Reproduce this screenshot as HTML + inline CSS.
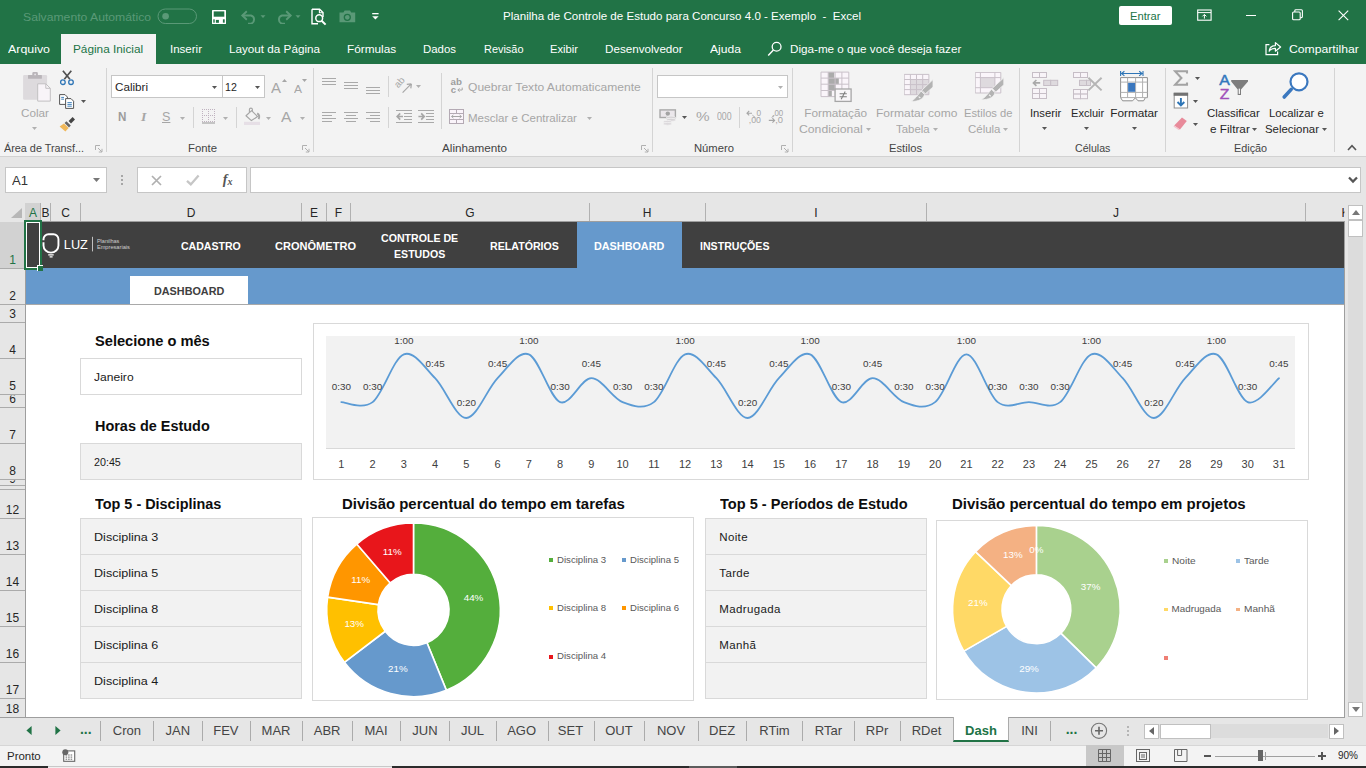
<!DOCTYPE html><html><head><meta charset="utf-8"><title>Planilha de Controle de Estudo para Concurso 4.0 - Exemplo - Excel</title><style>html,body{margin:0;padding:0;background:#fff}body{width:1366px;height:768px;overflow:hidden;position:relative;font-family:"Liberation Sans",sans-serif}#a{position:absolute;left:0;top:0;width:1366px;height:768px;overflow:hidden}#a>div,#a>svg,#a>span{position:absolute;display:block}#a>span{white-space:nowrap;line-height:20px;height:20px;transform-origin:0 50%}svg text{font-family:"Liberation Sans",sans-serif}</style></head><body><div id="a">
<div style="left:0px;top:0px;width:1366px;height:64px;background:#217346;"></div>
<div style="left:61px;top:34px;width:95px;height:30px;background:#f3f3f3;"></div>
<div style="left:0px;top:64px;width:1366px;height:92px;background:#f3f3f3;"></div>
<div style="left:0px;top:156px;width:1366px;height:1px;background:#d2d2d2;"></div>
<div style="left:0px;top:157px;width:1366px;height:46px;background:#e6e6e6;"></div>
<div style="left:5px;top:167px;width:102px;height:26px;background:#fff;box-sizing:border-box;border:1px solid #c6c6c6"></div>
<div style="left:137px;top:167px;width:110px;height:26px;background:#fff;box-sizing:border-box;border:1px solid #c6c6c6"></div>
<div style="left:250px;top:167px;width:1111px;height:26px;background:#fff;box-sizing:border-box;border:1px solid #c6c6c6"></div>
<div style="left:0px;top:203px;width:1366px;height:19px;background:#e6e6e6;"></div>
<div style="left:25px;top:222px;width:1320px;height:496px;background:#fff;"></div>
<div style="left:0px;top:222px;width:25px;height:496px;background:#e6e6e6;"></div>
<div style="left:25px;top:222px;width:1px;height:496px;background:#9e9e9e;"></div>
<div style="left:25px;top:221px;width:1320px;height:1px;background:#9e9e9e;"></div>
<div style="left:25px;top:203px;width:16px;height:18px;background:#d2d2d2;"></div>
<div style="left:25px;top:220px;width:16px;height:2px;background:#217346;"></div>
<div style="left:0px;top:222px;width:24px;height:47px;background:#d2d2d2;"></div>
<div style="left:24px;top:222px;width:2px;height:47px;background:#217346;"></div>
<div style="left:40px;top:203px;width:1px;height:18px;background:#b1b1b1;"></div>
<div style="left:50px;top:203px;width:1px;height:18px;background:#b1b1b1;"></div>
<div style="left:80px;top:203px;width:1px;height:18px;background:#b1b1b1;"></div>
<div style="left:301px;top:203px;width:1px;height:18px;background:#b1b1b1;"></div>
<div style="left:326px;top:203px;width:1px;height:18px;background:#b1b1b1;"></div>
<div style="left:350px;top:203px;width:1px;height:18px;background:#b1b1b1;"></div>
<div style="left:589px;top:203px;width:1px;height:18px;background:#b1b1b1;"></div>
<div style="left:705px;top:203px;width:1px;height:18px;background:#b1b1b1;"></div>
<div style="left:926px;top:203px;width:1px;height:18px;background:#b1b1b1;"></div>
<div style="left:1305px;top:203px;width:1px;height:18px;background:#b1b1b1;"></div>
<div style="left:0px;top:268px;width:25px;height:1px;background:#ababab;"></div>
<div style="left:0px;top:304px;width:25px;height:1px;background:#ababab;"></div>
<div style="left:0px;top:322px;width:25px;height:1px;background:#ababab;"></div>
<div style="left:0px;top:358px;width:25px;height:1px;background:#ababab;"></div>
<div style="left:0px;top:394px;width:25px;height:1px;background:#ababab;"></div>
<div style="left:0px;top:407px;width:25px;height:1px;background:#ababab;"></div>
<div style="left:0px;top:443px;width:25px;height:1px;background:#ababab;"></div>
<div style="left:0px;top:479px;width:25px;height:1px;background:#ababab;"></div>
<div style="left:0px;top:485px;width:25px;height:1px;background:#ababab;"></div>
<div style="left:0px;top:489px;width:25px;height:1px;background:#ababab;"></div>
<div style="left:0px;top:518px;width:25px;height:1px;background:#ababab;"></div>
<div style="left:0px;top:554px;width:25px;height:1px;background:#ababab;"></div>
<div style="left:0px;top:590px;width:25px;height:1px;background:#ababab;"></div>
<div style="left:0px;top:626px;width:25px;height:1px;background:#ababab;"></div>
<div style="left:0px;top:662px;width:25px;height:1px;background:#ababab;"></div>
<div style="left:0px;top:698px;width:25px;height:1px;background:#ababab;"></div>
<div style="left:0px;top:718px;width:25px;height:1px;background:#ababab;"></div>
<div style="left:26px;top:222px;width:1319px;height:46px;background:#404040;"></div>
<div style="left:26px;top:268px;width:1319px;height:36px;background:#6699cc;"></div>
<div style="left:577px;top:222px;width:105px;height:46px;background:#6699cc;"></div>
<div style="left:130px;top:276px;width:118px;height:28px;background:#fff;"></div>
<div style="left:26px;top:304px;width:1319px;height:1px;background:#a9a9a9;"></div>
<div style="left:24px;top:220px;width:18px;height:50px;background:transparent;box-sizing:border-box;border:2px solid #217346;"></div>
<div style="left:26px;top:222px;width:14px;height:46px;background:transparent;box-sizing:border-box;border:1px solid #fff;"></div>
<div style="left:37px;top:265px;width:6px;height:6px;background:#217346;box-sizing:border-box;border-left:1px solid #fff;border-top:1px solid #fff;"></div>
<div style="left:80px;top:358px;width:222px;height:37px;background:#fff;box-sizing:border-box;border:1px solid #d9d9d9"></div>
<div style="left:80px;top:443px;width:222px;height:37px;background:#f2f2f2;box-sizing:border-box;border:1px solid #d9d9d9"></div>
<div style="left:80px;top:518px;width:222px;height:181px;background:#f2f2f2;box-sizing:border-box;border:1px solid #d9d9d9"></div>
<div style="left:81px;top:554px;width:220px;height:1px;background:#d9d9d9;"></div>
<div style="left:81px;top:590px;width:220px;height:1px;background:#d9d9d9;"></div>
<div style="left:81px;top:626px;width:220px;height:1px;background:#d9d9d9;"></div>
<div style="left:81px;top:662px;width:220px;height:1px;background:#d9d9d9;"></div>
<div style="left:705px;top:518px;width:222px;height:181px;background:#f2f2f2;box-sizing:border-box;border:1px solid #d9d9d9"></div>
<div style="left:706px;top:554px;width:220px;height:1px;background:#d9d9d9;"></div>
<div style="left:706px;top:590px;width:220px;height:1px;background:#d9d9d9;"></div>
<div style="left:706px;top:626px;width:220px;height:1px;background:#d9d9d9;"></div>
<div style="left:706px;top:662px;width:220px;height:1px;background:#d9d9d9;"></div>
<div style="left:313px;top:323px;width:996px;height:157px;background:#fff;box-sizing:border-box;border:1px solid #d9d9d9"></div>
<div style="left:326px;top:336px;width:969px;height:112px;background:#f2f2f2;"></div>
<div style="left:326px;top:448px;width:969px;height:1px;background:#d9d9d9;"></div>
<div style="left:312px;top:517px;width:382px;height:184px;background:#fff;box-sizing:border-box;border:1px solid #d9d9d9"></div>
<div style="left:549px;top:558px;width:4px;height:4px;background:#54ae3c;"></div>
<div style="left:622px;top:558px;width:4px;height:4px;background:#6699cc;"></div>
<div style="left:549px;top:606px;width:4px;height:4px;background:#ffc000;"></div>
<div style="left:622px;top:606px;width:4px;height:4px;background:#ff9600;"></div>
<div style="left:549px;top:655px;width:4px;height:4px;background:#e8161b;"></div>
<div style="left:936px;top:520px;width:372px;height:180px;background:#fff;box-sizing:border-box;border:1px solid #d9d9d9"></div>
<div style="left:1164px;top:559px;width:4px;height:4px;background:#a9d18e;"></div>
<div style="left:1236px;top:559px;width:4px;height:4px;background:#9dc3e6;"></div>
<div style="left:1164px;top:608px;width:4px;height:3px;background:#ffd966;"></div>
<div style="left:1236px;top:608px;width:4px;height:3px;background:#f4b183;"></div>
<div style="left:1164px;top:656px;width:4px;height:4px;background:#ef7f74;"></div>
<div style="left:1119px;top:6px;width:53px;height:19px;background:#fff;border-radius:2px"></div>
<div style="left:1246px;top:15px;width:10px;height:1px;background:#fff;"></div>
<div style="left:106px;top:68px;width:1px;height:84px;background:#d4d4d4;"></div>
<div style="left:313px;top:68px;width:1px;height:84px;background:#d4d4d4;"></div>
<div style="left:652px;top:68px;width:1px;height:84px;background:#d4d4d4;"></div>
<div style="left:792px;top:68px;width:1px;height:84px;background:#d4d4d4;"></div>
<div style="left:1019px;top:68px;width:1px;height:84px;background:#d4d4d4;"></div>
<div style="left:1165px;top:68px;width:1px;height:84px;background:#d4d4d4;"></div>
<div style="left:1334px;top:68px;width:1px;height:84px;background:#d4d4d4;"></div>
<div style="left:111px;top:75px;width:112px;height:23px;background:#fff;box-sizing:border-box;border:1px solid #c6c6c6"></div>
<div style="left:222px;top:75px;width:43px;height:23px;background:#fff;box-sizing:border-box;border:1px solid #c6c6c6"></div>
<div style="left:193px;top:107px;width:1px;height:21px;background:#d4d4d4;"></div>
<div style="left:236px;top:107px;width:1px;height:21px;background:#d4d4d4;"></div>
<div style="left:322px;top:78px;width:14px;height:1px;background:#a9a9a9;"></div>
<div style="left:322px;top:81px;width:14px;height:1px;background:#a9a9a9;"></div>
<div style="left:322px;top:84px;width:14px;height:1px;background:#a9a9a9;"></div>
<div style="left:344px;top:82px;width:14px;height:1px;background:#a9a9a9;"></div>
<div style="left:344px;top:85px;width:14px;height:1px;background:#a9a9a9;"></div>
<div style="left:344px;top:88px;width:14px;height:1px;background:#a9a9a9;"></div>
<div style="left:366px;top:87px;width:14px;height:1px;background:#a9a9a9;"></div>
<div style="left:366px;top:90px;width:14px;height:1px;background:#a9a9a9;"></div>
<div style="left:366px;top:93px;width:14px;height:1px;background:#a9a9a9;"></div>
<div style="left:388px;top:76px;width:1px;height:21px;background:#d4d4d4;"></div>
<div style="left:322px;top:112px;width:14px;height:1px;background:#a9a9a9;"></div>
<div style="left:344px;top:112px;width:14px;height:1px;background:#a9a9a9;"></div>
<div style="left:366px;top:112px;width:14px;height:1px;background:#a9a9a9;"></div>
<div style="left:322px;top:115px;width:10px;height:1px;background:#a9a9a9;"></div>
<div style="left:346px;top:115px;width:10px;height:1px;background:#a9a9a9;"></div>
<div style="left:370px;top:115px;width:10px;height:1px;background:#a9a9a9;"></div>
<div style="left:322px;top:118px;width:14px;height:1px;background:#a9a9a9;"></div>
<div style="left:344px;top:118px;width:14px;height:1px;background:#a9a9a9;"></div>
<div style="left:366px;top:118px;width:14px;height:1px;background:#a9a9a9;"></div>
<div style="left:322px;top:121px;width:10px;height:1px;background:#a9a9a9;"></div>
<div style="left:346px;top:121px;width:10px;height:1px;background:#a9a9a9;"></div>
<div style="left:370px;top:121px;width:10px;height:1px;background:#a9a9a9;"></div>
<div style="left:388px;top:107px;width:1px;height:21px;background:#d4d4d4;"></div>
<div style="left:396px;top:110px;width:16px;height:1px;background:#a9a9a9;"></div>
<div style="left:396px;top:122px;width:16px;height:1px;background:#a9a9a9;"></div>
<div style="left:404px;top:113px;width:8px;height:1px;background:#a9a9a9;"></div>
<div style="left:404px;top:116px;width:8px;height:1px;background:#a9a9a9;"></div>
<div style="left:404px;top:119px;width:8px;height:1px;background:#a9a9a9;"></div>
<div style="left:418px;top:110px;width:16px;height:1px;background:#a9a9a9;"></div>
<div style="left:418px;top:122px;width:16px;height:1px;background:#a9a9a9;"></div>
<div style="left:426px;top:113px;width:8px;height:1px;background:#a9a9a9;"></div>
<div style="left:426px;top:116px;width:8px;height:1px;background:#a9a9a9;"></div>
<div style="left:426px;top:119px;width:8px;height:1px;background:#a9a9a9;"></div>
<div style="left:441px;top:73px;width:1px;height:56px;background:#d4d4d4;"></div>
<div style="left:657px;top:75px;width:131px;height:23px;background:#fff;box-sizing:border-box;border:1px solid #c6c6c6"></div>
<div style="left:739px;top:107px;width:1px;height:21px;background:#d4d4d4;"></div>
<div style="left:121px;top:175px;width:2px;height:2px;background:#a6a6a6;"></div>
<div style="left:121px;top:179px;width:2px;height:2px;background:#a6a6a6;"></div>
<div style="left:121px;top:183px;width:2px;height:2px;background:#a6a6a6;"></div>
<div style="left:1345px;top:203px;width:21px;height:515px;background:#e6e6e6;"></div>
<div style="left:1344px;top:222px;width:1px;height:495px;background:#9e9e9e;"></div>
<div style="left:1348px;top:236px;width:15px;height:467px;background:#dcdcdc;"></div>
<div style="left:1348px;top:205px;width:15px;height:15px;background:#fff;box-sizing:border-box;border:1px solid #c0c0c0"></div>
<div style="left:1348px;top:220px;width:15px;height:17px;background:#fff;box-sizing:border-box;border:1px solid #c0c0c0"></div>
<div style="left:1348px;top:702px;width:15px;height:15px;background:#fff;box-sizing:border-box;border:1px solid #c0c0c0"></div>
<div style="left:0px;top:717px;width:1366px;height:28px;background:#e6e6e6;"></div>
<div style="left:0px;top:717px;width:1345px;height:1px;background:#9e9e9e;"></div>
<div style="left:153px;top:721px;width:1px;height:20px;background:#ababab;"></div>
<div style="left:202px;top:721px;width:1px;height:20px;background:#ababab;"></div>
<div style="left:250px;top:721px;width:1px;height:20px;background:#ababab;"></div>
<div style="left:302px;top:721px;width:1px;height:20px;background:#ababab;"></div>
<div style="left:352px;top:721px;width:1px;height:20px;background:#ababab;"></div>
<div style="left:400px;top:721px;width:1px;height:20px;background:#ababab;"></div>
<div style="left:449px;top:721px;width:1px;height:20px;background:#ababab;"></div>
<div style="left:496px;top:721px;width:1px;height:20px;background:#ababab;"></div>
<div style="left:548px;top:721px;width:1px;height:20px;background:#ababab;"></div>
<div style="left:594px;top:721px;width:1px;height:20px;background:#ababab;"></div>
<div style="left:644px;top:721px;width:1px;height:20px;background:#ababab;"></div>
<div style="left:698px;top:721px;width:1px;height:20px;background:#ababab;"></div>
<div style="left:746px;top:721px;width:1px;height:20px;background:#ababab;"></div>
<div style="left:802px;top:721px;width:1px;height:20px;background:#ababab;"></div>
<div style="left:854px;top:721px;width:1px;height:20px;background:#ababab;"></div>
<div style="left:900px;top:721px;width:1px;height:20px;background:#ababab;"></div>
<div style="left:953px;top:717px;width:56px;height:25px;background:#fff;box-sizing:border-box;border-left:1px solid #ababab;border-right:1px solid #ababab;border-bottom:2px solid #217346"></div>
<div style="left:1050px;top:721px;width:1px;height:20px;background:#ababab;"></div>
<div style="left:100px;top:721px;width:1px;height:20px;background:#ababab;"></div>
<div style="left:1127px;top:726px;width:2px;height:2px;background:#b5b5b5;"></div>
<div style="left:1127px;top:730px;width:2px;height:2px;background:#b5b5b5;"></div>
<div style="left:1127px;top:734px;width:2px;height:2px;background:#b5b5b5;"></div>
<div style="left:1159px;top:724px;width:169px;height:14px;background:#dcdcdc;"></div>
<div style="left:1144px;top:724px;width:15px;height:15px;background:#fff;box-sizing:border-box;border:1px solid #c0c0c0"></div>
<div style="left:1160px;top:724px;width:51px;height:15px;background:#fff;box-sizing:border-box;border:1px solid #c0c0c0"></div>
<div style="left:1329px;top:724px;width:15px;height:15px;background:#fff;box-sizing:border-box;border:1px solid #c0c0c0"></div>
<div style="left:0px;top:745px;width:1366px;height:21px;background:#f3f3f3;"></div>
<div style="left:0px;top:745px;width:1366px;height:1px;background:#d6d6d6;"></div>
<div style="left:1086px;top:745px;width:38px;height:21px;background:#c8c8c8;"></div>
<div style="left:1204px;top:755px;width:7px;height:2px;background:#555;"></div>
<div style="left:1215px;top:756px;width:100px;height:1px;background:#a0a0a0;"></div>
<div style="left:1265px;top:752px;width:1px;height:8px;background:#a0a0a0;"></div>
<div style="left:1258px;top:750px;width:5px;height:11px;background:#666;"></div>
<div style="left:1318px;top:755px;width:8px;height:2px;background:#555;"></div>
<div style="left:1321px;top:752px;width:2px;height:8px;background:#555;"></div>
<div style="left:0px;top:766px;width:1366px;height:2px;background:#2b2b2b;"></div>
<div style="left:48px;top:766px;width:344px;height:1px;background:#c8c8c8;"></div>
<div style="left:48px;top:767px;width:344px;height:1px;background:#f0f0f0;"></div>
<div style="left:689px;top:766px;width:48px;height:2px;background:#5c5c5c;"></div>
<svg style="left:11px;top:208px" width="12" height="11" viewBox="0 0 12 11"><path d="M11 0 L11 10 L0 10 Z" fill="#b7b7b7"/></svg>
<svg style="left:41px;top:232px" width="92" height="28" viewBox="0 0 92 28">
<path d="M2.5 8.3 V7.3 A5 5 0 0 1 7.5 2.3 H12.45 A5 5 0 0 1 17.45 7.3 V13.4 A7.47 7.2 0 0 1 2.5 13.4 V10.3" fill="none" stroke="#fff" stroke-width="1.9"/>
<path d="M7.2 22.9 H12.7 M8.6 24.9 H11.6" stroke="#fff" stroke-width="1.3" fill="none"/>
<rect x="51" y="4.8" width="0.9" height="14.6" fill="#d0d0d0"/>
<text x="22.8" y="16.6" font-size="12.8" fill="#fff" textLength="24.1" lengthAdjust="spacingAndGlyphs">LUZ</text>
<text x="55.9" y="11.4" font-size="5.8" fill="#cfcfcf" textLength="22.5" lengthAdjust="spacingAndGlyphs">Planilhas</text>
<text x="55.9" y="17.2" font-size="5.8" fill="#cfcfcf" textLength="33" lengthAdjust="spacingAndGlyphs">Empresariais</text>
</svg>
<svg style="left:0px;top:323px" width="1366" height="160" viewBox="0 323 1366 160"><path d="M341.3 402.1 C346.5 402.1 362.1 410.0 372.6 402.1 C383.0 394.1 393.4 358.2 403.8 354.3 C414.2 350.3 424.6 367.5 435.1 378.2 C445.5 388.8 455.9 418.0 466.3 418.0 C476.7 418.0 487.2 388.8 497.6 378.2 C508.0 367.5 518.4 350.3 528.8 354.3 C539.2 358.2 549.7 398.1 560.1 402.1 C570.5 406.1 580.9 378.2 591.3 378.2 C601.8 378.2 612.2 398.1 622.6 402.1 C633.0 406.1 643.4 410.0 653.9 402.1 C664.3 394.1 674.7 358.2 685.1 354.3 C695.5 350.3 705.9 367.5 716.4 378.2 C726.8 388.8 737.2 418.0 747.6 418.0 C758.0 418.0 768.5 388.8 778.9 378.2 C789.3 367.5 799.7 350.3 810.1 354.3 C820.5 358.2 831.0 398.1 841.4 402.1 C851.8 406.1 862.2 378.2 872.6 378.2 C883.1 378.2 893.5 398.1 903.9 402.1 C914.3 406.1 924.7 410.0 935.1 402.1 C945.6 394.1 956.0 354.3 966.4 354.3 C976.8 354.3 987.2 394.1 997.7 402.1 C1008.1 410.0 1018.5 402.1 1028.9 402.1 C1039.3 402.1 1049.7 410.0 1060.2 402.1 C1070.6 394.1 1081.0 358.2 1091.4 354.3 C1101.8 350.3 1112.3 367.5 1122.7 378.2 C1133.1 388.8 1143.5 418.0 1153.9 418.0 C1164.3 418.0 1174.8 388.8 1185.2 378.2 C1195.6 367.5 1206.0 350.3 1216.4 354.3 C1226.9 358.2 1237.3 398.1 1247.7 402.1 C1258.1 406.1 1273.7 382.2 1279.0 378.2" fill="none" stroke="#5b9bd5" stroke-width="1.8" stroke-linecap="round" stroke-linejoin="round"/></svg>
<svg style="left:312px;top:517px" width="382" height="184" viewBox="312 517 382 184"><path d="M413.50 523.00 A86.8 86.8 0 0 1 446.30 690.17 L426.91 642.67 A35.5 35.5 0 0 0 413.50 574.30 Z" fill="#54ae3c" stroke="#fff" stroke-width="1.6" stroke-linejoin="round"/><path d="M446.30 690.17 A86.8 86.8 0 0 1 344.36 662.28 L385.22 631.26 A35.5 35.5 0 0 0 426.91 642.67 Z" fill="#6699cc" stroke="#fff" stroke-width="1.6" stroke-linejoin="round"/><path d="M344.36 662.28 A86.8 86.8 0 0 1 327.63 597.12 L378.38 604.61 A35.5 35.5 0 0 0 385.22 631.26 Z" fill="#ffc000" stroke="#fff" stroke-width="1.6" stroke-linejoin="round"/><path d="M327.63 597.12 A86.8 86.8 0 0 1 356.78 544.09 L390.30 582.93 A35.5 35.5 0 0 0 378.38 604.61 Z" fill="#ff9600" stroke="#fff" stroke-width="1.6" stroke-linejoin="round"/><path d="M356.78 544.09 A86.8 86.8 0 0 1 413.50 523.00 L413.50 574.30 A35.5 35.5 0 0 0 390.30 582.93 Z" fill="#e8161b" stroke="#fff" stroke-width="1.6" stroke-linejoin="round"/></svg>
<svg style="left:936px;top:520px" width="372" height="180" viewBox="936 520 372 180"><path d="M1036.40 525.40 A83.8 83.8 0 0 1 1096.17 667.94 L1060.94 633.31 A34.4 34.4 0 0 0 1036.40 574.80 Z" fill="#a9d18e" stroke="#fff" stroke-width="1.6" stroke-linejoin="round"/><path d="M1096.17 667.94 A83.8 83.8 0 0 1 963.83 651.10 L1006.61 626.40 A34.4 34.4 0 0 0 1060.94 633.31 Z" fill="#9dc3e6" stroke="#fff" stroke-width="1.6" stroke-linejoin="round"/><path d="M963.83 651.10 A83.8 83.8 0 0 1 975.51 551.62 L1011.41 585.56 A34.4 34.4 0 0 0 1006.61 626.40 Z" fill="#ffd966" stroke="#fff" stroke-width="1.6" stroke-linejoin="round"/><path d="M975.51 551.62 A83.8 83.8 0 0 1 1036.40 525.40 L1036.40 574.80 A34.4 34.4 0 0 0 1011.41 585.56 Z" fill="#f4b183" stroke="#fff" stroke-width="1.6" stroke-linejoin="round"/></svg>
<svg style="left:157px;top:8px" width="41" height="17" viewBox="0 0 41 17"><rect x="1" y="1" width="38.5" height="14.5" rx="7.25" fill="none" stroke="#5a9977" stroke-width="1"/><circle cx="8.6" cy="8.25" r="3.3" fill="#5a9977"/></svg>
<svg style="left:212px;top:10px" width="14" height="14" viewBox="0 0 14 14"><rect x="0" y="0" width="14" height="14" rx="0.6" fill="#fff"/><rect x="1.7" y="1.4" width="10.6" height="5.3" fill="#217346"/><rect x="1.3" y="9.3" width="1.4" height="3.4" fill="#217346"/><rect x="10.9" y="9.3" width="1.8" height="3.4" fill="#217346"/><rect x="3.9" y="9.9" width="3" height="2.9" fill="#217346"/></svg>
<svg style="left:240px;top:9px" width="26" height="15" viewBox="0 0 26 15"><path d="M2.5 6.5 H11 A4.2 4.2 0 0 1 11 14.6 H8" fill="none" stroke="#5a9977" stroke-width="1.9"/><path d="M6.8 2.2 L2.3 6.5 L6.8 10.8" fill="none" stroke="#5a9977" stroke-width="1.9"/><path d="M20.5 6.3 h5 l-2.5 2.7z" fill="#5a9977"/></svg>
<svg style="left:275px;top:9px" width="26" height="15" viewBox="0 0 26 15"><path d="M15.5 6.5 H7 A4.2 4.2 0 0 0 7 14.6 H10" fill="none" stroke="#5a9977" stroke-width="1.9"/><path d="M11.2 2.2 L15.7 6.5 L11.2 10.8" fill="none" stroke="#5a9977" stroke-width="1.9"/><path d="M20.5 6.3 h5 l-2.5 2.7z" fill="#5a9977"/></svg>
<svg style="left:310px;top:8px" width="18" height="18" viewBox="0 0 18 18"><path d="M2 1.2 H9.6 L13 4.6 V9 M2 1.2 V15.8 H8" fill="none" stroke="#fff" stroke-width="1.4"/><path d="M9.4 1.4 V4.8 H12.8" fill="none" stroke="#fff" stroke-width="1.1"/><circle cx="9.2" cy="10.2" r="3.4" fill="none" stroke="#fff" stroke-width="1.5"/><path d="M11.6 12.8 L15.6 16.6" stroke="#fff" stroke-width="2"/></svg>
<svg style="left:339px;top:10px" width="17" height="13" viewBox="0 0 17 13"><path d="M0.5 2.6 H4.4 L5.6 0.6 H11 L12.2 2.6 H16.2 V12.2 H0.5 Z" fill="#5a9977"/><circle cx="8.3" cy="7.3" r="3" fill="none" stroke="#217346" stroke-width="1.3"/></svg>
<svg style="left:371px;top:12px" width="9" height="9" viewBox="0 0 9 9"><rect x="1.2" y="1" width="6.4" height="1.3" fill="#fff"/><path d="M1.2 4.2 h6.4 l-3.2 3.4z" fill="#fff"/></svg>
<svg style="left:1197px;top:9px" width="15" height="12" viewBox="0 0 15 12"><rect x="0.7" y="1" width="13.4" height="10.2" fill="none" stroke="#fff" stroke-width="1.1"/><path d="M0.7 3.6 H14" stroke="#fff" stroke-width="1"/><path d="M7.4 9.6 V5.6 M5.4 7.4 L7.4 5.4 L9.4 7.4" fill="none" stroke="#fff" stroke-width="1"/></svg>
<svg style="left:1292px;top:9px" width="11" height="12" viewBox="0 0 11 12"><rect x="0.6" y="3" width="7.6" height="7.8" rx="1" fill="none" stroke="#fff" stroke-width="1.1"/><path d="M2.8 3 V1.6 A1 1 0 0 1 3.8 0.7 H9.4 A1 1 0 0 1 10.4 1.7 V7.6 A1 1 0 0 1 9.4 8.6 H8.4" fill="none" stroke="#fff" stroke-width="1.1"/></svg>
<svg style="left:1338px;top:10px" width="11" height="11" viewBox="0 0 11 11"><path d="M0.6 0.6 L10.2 10.2 M10.2 0.6 L0.6 10.2" stroke="#fff" stroke-width="1.1"/></svg>
<svg style="left:767px;top:41px" width="16" height="16" viewBox="0 0 16 16"><circle cx="9.6" cy="5.8" r="4.4" fill="none" stroke="#fff" stroke-width="1.3"/><path d="M6.4 9 L1.2 14.4" stroke="#fff" stroke-width="1.5"/></svg>
<svg style="left:1265px;top:40px" width="17" height="16" viewBox="0 0 17 16"><path d="M4.4 4.6 H1 V14.6 H12.6 V11.6" fill="none" stroke="#fff" stroke-width="1.2"/><path d="M4.2 11.2 C4.6 7.2 7.4 5.6 10.4 5.6 V2.6 L15.6 7 L10.4 11.2 V8.4 C8 8.2 5.8 9 4.2 11.2 Z" fill="none" stroke="#fff" stroke-width="1.2" stroke-linejoin="round"/></svg>
<svg style="left:95px;top:145px" width="8" height="8" viewBox="0 0 8 8"><path d="M0.5 5 V0.5 H5" fill="none" stroke="#b0b0b0" stroke-width="1"/><path d="M3 3 L7 7 M7 3.8 V7 H3.8" fill="none" stroke="#b0b0b0" stroke-width="1"/></svg>
<svg style="left:302px;top:145px" width="8" height="8" viewBox="0 0 8 8"><path d="M0.5 5 V0.5 H5" fill="none" stroke="#b0b0b0" stroke-width="1"/><path d="M3 3 L7 7 M7 3.8 V7 H3.8" fill="none" stroke="#b0b0b0" stroke-width="1"/></svg>
<svg style="left:641px;top:145px" width="8" height="8" viewBox="0 0 8 8"><path d="M0.5 5 V0.5 H5" fill="none" stroke="#b0b0b0" stroke-width="1"/><path d="M3 3 L7 7 M7 3.8 V7 H3.8" fill="none" stroke="#b0b0b0" stroke-width="1"/></svg>
<svg style="left:781px;top:145px" width="8" height="8" viewBox="0 0 8 8"><path d="M0.5 5 V0.5 H5" fill="none" stroke="#b0b0b0" stroke-width="1"/><path d="M3 3 L7 7 M7 3.8 V7 H3.8" fill="none" stroke="#b0b0b0" stroke-width="1"/></svg>
<svg style="left:1347px;top:144px" width="10" height="7" viewBox="0 0 10 7"><path d="M1 6 L5 1.6 L9 6" fill="none" stroke="#555" stroke-width="1.6"/></svg>
<svg style="left:22px;top:71px" width="30" height="32" viewBox="0 0 30 32"><rect x="1.1" y="4.1" width="24" height="24.7" rx="1.2" fill="#dddadd"/><rect x="6" y="3.9" width="13.9" height="3.9" rx="0.6" fill="#b9b5b9"/><path d="M10.3 4 V2.4 A1.3 1.3 0 0 1 11.6 1.1 H14.6 A1.3 1.3 0 0 1 15.9 2.4 V4 Z" fill="#b9b5b9"/><circle cx="13.1" cy="3.4" r="0.9" fill="#e9e6e9"/>
<path d="M15.7 12.8 H23.8 L28.3 17.3 V30.1 H15.7 Z" fill="#f8f4f8" stroke="#c2c0c2" stroke-width="1"/><path d="M23.8 12.8 V17.3 H28.3" fill="none" stroke="#c2c0c2" stroke-width="1"/></svg>
<svg style="left:32.0px;top:126.7px" width="5" height="3" viewBox="0 0 5 3"><path d="M0 0 H5 L2.5 3 Z" fill="#b0b0b0"/></svg>
<svg style="left:59px;top:70px" width="16" height="16" viewBox="0 0 16 16"><path d="M3.9 0.7 L10.9 9.2 M12.3 0.7 L5.3 9.2" stroke="#505050" stroke-width="1.7" fill="none"/><circle cx="3.9" cy="12.2" r="2.3" fill="none" stroke="#2e75b6" stroke-width="1.3"/><circle cx="12" cy="12.2" r="2.3" fill="none" stroke="#2e75b6" stroke-width="1.3"/></svg>
<svg style="left:59px;top:94px" width="16" height="15" viewBox="0 0 16 15"><path d="M0.6 0.6 H6 L8.4 3 V10.4 H0.6 Z" fill="#fff" stroke="#555" stroke-width="1"/><path d="M6.6 4.6 H12 L14.6 7.2 V14.4 H6.6 Z" fill="#fff" stroke="#555" stroke-width="1"/><path d="M8.4 8.6 H12.8 M8.4 10.4 H12.8 M8.4 12.2 H12.8 M2.2 3.4 H5 M2.2 5.2 H5" stroke="#2e75b6" stroke-width="0.9"/></svg>
<svg style="left:80.5px;top:99.5px" width="5" height="3" viewBox="0 0 5 3"><path d="M0 0 H5 L2.5 3 Z" fill="#555"/></svg>
<svg style="left:59px;top:116px" width="17" height="16" viewBox="0 0 17 16"><path d="M9.6 5 L13.6 1 L16 3.4 L12 7.4 Z" fill="#444"/><path d="M7.4 5.2 L11.8 9.6 L10 11.4 L5.6 7 Z" fill="#666"/><path d="M5 7.4 L9.6 12 L6.4 15.4 L0.6 10.6 Z" fill="#f0b85a"/></svg>
<svg style="left:211.5px;top:85.5px" width="5" height="3" viewBox="0 0 5 3"><path d="M0 0 H5 L2.5 3 Z" fill="#555"/></svg>
<svg style="left:254.8px;top:85.5px" width="5" height="3" viewBox="0 0 5 3"><path d="M0 0 H5 L2.5 3 Z" fill="#555"/></svg>
<svg style="left:282px;top:79px" width="5" height="3" viewBox="0 0 5 3"><path d="M0 3 L2.5 0 L5 3Z" fill="#a6a6a6"/></svg>
<svg style="left:302px;top:79px" width="5" height="3" viewBox="0 0 5 3"><path d="M0 0 L2.5 3 L5 0Z" fill="#a6a6a6"/></svg>
<svg style="left:179.9px;top:116.7px" width="5" height="3" viewBox="0 0 5 3"><path d="M0 0 H5 L2.5 3 Z" fill="#b0b0b0"/></svg>
<svg style="left:202px;top:109px" width="14" height="15" viewBox="0 0 14 15"><rect x="0" y="0" width="1" height="1" fill="#bfb2bf"/><rect x="2" y="0" width="1" height="1" fill="#bfb2bf"/><rect x="4" y="0" width="1" height="1" fill="#bfb2bf"/><rect x="6" y="0" width="1" height="1" fill="#bfb2bf"/><rect x="8" y="0" width="1" height="1" fill="#bfb2bf"/><rect x="10" y="0" width="1" height="1" fill="#bfb2bf"/><rect x="12" y="0" width="1" height="1" fill="#bfb2bf"/><rect x="0" y="6" width="1" height="1" fill="#bfb2bf"/><rect x="2" y="6" width="1" height="1" fill="#bfb2bf"/><rect x="4" y="6" width="1" height="1" fill="#bfb2bf"/><rect x="6" y="6" width="1" height="1" fill="#bfb2bf"/><rect x="8" y="6" width="1" height="1" fill="#bfb2bf"/><rect x="10" y="6" width="1" height="1" fill="#bfb2bf"/><rect x="12" y="6" width="1" height="1" fill="#bfb2bf"/><rect x="0" y="12" width="1" height="1" fill="#bfb2bf"/><rect x="2" y="12" width="1" height="1" fill="#bfb2bf"/><rect x="4" y="12" width="1" height="1" fill="#bfb2bf"/><rect x="6" y="12" width="1" height="1" fill="#bfb2bf"/><rect x="8" y="12" width="1" height="1" fill="#bfb2bf"/><rect x="10" y="12" width="1" height="1" fill="#bfb2bf"/><rect x="12" y="12" width="1" height="1" fill="#bfb2bf"/><rect x="0" y="0" width="1" height="1" fill="#bfb2bf"/><rect x="0" y="2" width="1" height="1" fill="#bfb2bf"/><rect x="0" y="4" width="1" height="1" fill="#bfb2bf"/><rect x="0" y="6" width="1" height="1" fill="#bfb2bf"/><rect x="0" y="8" width="1" height="1" fill="#bfb2bf"/><rect x="0" y="10" width="1" height="1" fill="#bfb2bf"/><rect x="0" y="12" width="1" height="1" fill="#bfb2bf"/><rect x="6" y="0" width="1" height="1" fill="#bfb2bf"/><rect x="6" y="2" width="1" height="1" fill="#bfb2bf"/><rect x="6" y="4" width="1" height="1" fill="#bfb2bf"/><rect x="6" y="6" width="1" height="1" fill="#bfb2bf"/><rect x="6" y="8" width="1" height="1" fill="#bfb2bf"/><rect x="6" y="10" width="1" height="1" fill="#bfb2bf"/><rect x="6" y="12" width="1" height="1" fill="#bfb2bf"/><rect x="12" y="0" width="1" height="1" fill="#bfb2bf"/><rect x="12" y="2" width="1" height="1" fill="#bfb2bf"/><rect x="12" y="4" width="1" height="1" fill="#bfb2bf"/><rect x="12" y="6" width="1" height="1" fill="#bfb2bf"/><rect x="12" y="8" width="1" height="1" fill="#bfb2bf"/><rect x="12" y="10" width="1" height="1" fill="#bfb2bf"/><rect x="12" y="12" width="1" height="1" fill="#bfb2bf"/><rect x="0" y="13.4" width="13" height="1.2" fill="#a6a6a6"/></svg>
<svg style="left:222.7px;top:116.7px" width="5" height="3" viewBox="0 0 5 3"><path d="M0 0 H5 L2.5 3 Z" fill="#b0b0b0"/></svg>
<svg style="left:243px;top:107px" width="19" height="19" viewBox="0 0 19 19"><path d="M8.6 3.6 L14.6 9.6 L8.4 13.6 L3 8.8 Z" fill="none" stroke="#a6a6a6" stroke-width="1.2" stroke-linejoin="round"/><path d="M6.4 5.4 V2.6 A1.5 1.5 0 0 1 9.4 2.6 V4.4" fill="none" stroke="#a6a6a6" stroke-width="1.1"/><path d="M14.2 6.4 C16.2 7.6 16.6 10 15.6 12.2" fill="none" stroke="#a6a6a6" stroke-width="1.9"/><rect x="1" y="14.8" width="16" height="3.2" fill="#e6dfe6"/></svg>
<svg style="left:265.7px;top:116.7px" width="5" height="3" viewBox="0 0 5 3"><path d="M0 0 H5 L2.5 3 Z" fill="#b0b0b0"/></svg>
<svg style="left:300.1px;top:116.7px" width="5" height="3" viewBox="0 0 5 3"><path d="M0 0 H5 L2.5 3 Z" fill="#b0b0b0"/></svg>
<svg style="left:395px;top:77px" width="19" height="18" viewBox="0 0 19 18"><text x="0" y="0" font-size="9.6" fill="#a6a6a6" transform="translate(3.2 11.4) rotate(-48)">ab</text><path d="M7.6 15.6 L16 7.2 M16.4 6.8 l-4.6 0.6 M16.4 6.8 l-0.6 4.6" stroke="#a6a6a6" stroke-width="1.2" fill="none"/></svg>
<svg style="left:415.7px;top:85.1px" width="5" height="3" viewBox="0 0 5 3"><path d="M0 0 H5 L2.5 3 Z" fill="#b0b0b0"/></svg>
<svg style="left:396px;top:112px" width="8" height="9" viewBox="0 0 8 9"><path d="M7 4.5 H1.4 M4.2 1.4 L1.2 4.5 L4.2 7.6" fill="none" stroke="#a6a6a6" stroke-width="1.7"/></svg>
<svg style="left:418px;top:112px" width="8" height="9" viewBox="0 0 8 9"><path d="M0.4 4.5 H6 M3.2 1.4 L6.2 4.5 L3.2 7.6" fill="none" stroke="#a6a6a6" stroke-width="1.7"/></svg>
<svg style="left:450px;top:77px" width="14" height="17" viewBox="0 0 14 17"><text x="0.6" y="8.4" font-size="9.6" fill="#9e9e9e" textLength="11.4" lengthAdjust="spacingAndGlyphs" font-weight="bold">ab</text><text x="0.8" y="15.8" font-size="9.6" fill="#9e9e9e" font-weight="bold">c</text><path d="M12.2 10.6 V13 H8 M9.6 11.4 L7.8 13 L9.6 14.6" fill="none" stroke="#a6a6a6" stroke-width="1"/></svg>
<svg style="left:449px;top:109px" width="15" height="15" viewBox="0 0 15 15"><rect x="0.5" y="0.5" width="14" height="14" fill="#faf4fa" stroke="#b4aab4" stroke-width="1"/><path d="M0.5 4.5 H14.5 M0.5 10.5 H14.5 M7.5 0.5 V4.5 M7.5 10.5 V14.5" stroke="#b4aab4" stroke-width="1" fill="none"/><path d="M2.6 7.5 H12.4 M4.4 5.9 L2.6 7.5 L4.4 9.1 M10.6 5.9 L12.4 7.5 L10.6 9.1" fill="none" stroke="#a6a6a6" stroke-width="1"/></svg>
<svg style="left:586.9px;top:116.7px" width="5" height="3" viewBox="0 0 5 3"><path d="M0 0 H5 L2.5 3 Z" fill="#b0b0b0"/></svg>
<svg style="left:778.0px;top:85.5px" width="5" height="3" viewBox="0 0 5 3"><path d="M0 0 H5 L2.5 3 Z" fill="#b0b0b0"/></svg>
<svg style="left:659px;top:109px" width="19" height="17" viewBox="0 0 19 17"><rect x="1" y="0.9" width="15.4" height="7.6" fill="#ebe7eb" stroke="#a9a9a9" stroke-width="1.4"/><circle cx="8.8" cy="4.6" r="2.2" fill="#a3a3a3"/><ellipse cx="12" cy="8.6" rx="4.6" ry="1.5" fill="#d6d3d6" stroke="#f3f3f3" stroke-width="0.7"/><ellipse cx="12" cy="10.8" rx="4.6" ry="1.5" fill="#d6d3d6" stroke="#f3f3f3" stroke-width="0.7"/><ellipse cx="8.6" cy="12.8" rx="4.4" ry="1.4" fill="#dcd9dc" stroke="#f3f3f3" stroke-width="0.7"/><ellipse cx="8.6" cy="14.8" rx="4.4" ry="1.4" fill="#dcd9dc" stroke="#f3f3f3" stroke-width="0.7"/></svg>
<svg style="left:681.7px;top:116.1px" width="5" height="3" viewBox="0 0 5 3"><path d="M0 0 H5 L2.5 3 Z" fill="#555"/></svg>
<svg style="left:746px;top:108px" width="17" height="17" viewBox="0 0 17 17"><text x="10.4" y="7.8" font-size="8.8" fill="#a6a6a6" textLength="4.6" lengthAdjust="spacingAndGlyphs">0</text><text x="2.8" y="15.1" font-size="8.8" fill="#a6a6a6" textLength="12.2" lengthAdjust="spacingAndGlyphs">,00</text><path d="M6 5.2 H1 M3.2 3 L1 5.2 L3.2 7.4" fill="none" stroke="#a6a6a6" stroke-width="1.1"/><path d="M6.4 7.2 L9.4 9.6" stroke="#a6a6a6" stroke-width="0.9"/></svg>
<svg style="left:768px;top:108px" width="17" height="17" viewBox="0 0 17 17"><text x="4.2" y="7.8" font-size="8.8" fill="#a6a6a6" textLength="11" lengthAdjust="spacingAndGlyphs">,00</text><text x="7.2" y="15.1" font-size="8.8" fill="#a6a6a6" textLength="7.8" lengthAdjust="spacingAndGlyphs">,0</text><path d="M0.8 12.4 H6.6 M4.4 10.2 L6.6 12.4 L4.4 14.6" fill="none" stroke="#a6a6a6" stroke-width="1.1"/><path d="M3.6 9.4 L6.4 7.4" stroke="#a6a6a6" stroke-width="0.9"/></svg>
<svg style="left:820px;top:71px" width="33" height="32" viewBox="0 0 33 32"><rect x="1" y="1.1" width="27.8" height="24.5" fill="#faf5fa"/>
<rect x="8.2" y="1.1" width="6" height="6" fill="#ababab"/><rect x="8.2" y="7.1" width="10.6" height="6.1" fill="#ababab"/><rect x="8.2" y="13.2" width="7.4" height="6.3" fill="#ababab"/><rect x="8.2" y="19.5" width="3.6" height="6.1" fill="#ababab"/>
<path d="M1 1.1 H28.8 V25.6 H1 Z M1 7.1 H28.8 M1 13.2 H28.8 M1 19.5 H28.8 M8.2 1.1 V25.6 M15.1 1.1 V25.6 M21.9 1.1 V25.6" stroke="#c9c1c9" stroke-width="1" fill="none"/>
<rect x="15.1" y="18" width="16" height="12.4" fill="#f9f6f9" stroke="#a6a6a6" stroke-width="1.3"/><path d="M19.6 22.8 H26.8 M19.6 25.8 H26.8 M25.2 20.4 L21.2 28.2" stroke="#7f7f7f" stroke-width="1.1" fill="none"/></svg>
<svg style="left:866.1px;top:128.1px" width="5" height="3" viewBox="0 0 5 3"><path d="M0 0 H5 L2.5 3 Z" fill="#b0b0b0"/></svg>
<svg style="left:904px;top:72px" width="31" height="31" viewBox="0 0 31 31"><rect x="0.2" y="2.4" width="24.7" height="20.3" fill="#faf5fa"/><rect x="6.4" y="7.5" width="18.5" height="15.2" fill="#dedade"/>
<path d="M0.2 2.4 H24.9 V22.7 H0.2 Z M0.2 7.5 H24.9 M0.2 12.6 H24.9 M0.2 17.6 H24.9 M6.4 2.4 V22.7 M12.5 2.4 V22.7 M18.7 2.4 V22.7" stroke="#c9c1c9" stroke-width="1" fill="none"/>
<path d="M29 7.6 V15 L21.4 21.8 L17.8 18.2 Z" fill="#b3b3b3" stroke="#f3f3f3" stroke-width="0.8"/><path d="M17 19 L20.6 22.6 C19.4 27 14.6 29.6 6.8 29.6 C11 27.4 13.8 23.2 17 19 Z" fill="#b3b3b3" stroke="#f3f3f3" stroke-width="0.8"/><path d="M14.6 24.6 L16.4 26" stroke="#f3f3f3" stroke-width="1.1"/></svg>
<svg style="left:933.1px;top:128.1px" width="5" height="3" viewBox="0 0 5 3"><path d="M0 0 H5 L2.5 3 Z" fill="#b0b0b0"/></svg>
<svg style="left:975px;top:72px" width="31" height="30" viewBox="0 0 31 30"><rect x="0.2" y="0.4" width="25.6" height="20.6" fill="#faf5fa"/><rect x="5.4" y="5.6" width="14.5" height="10.1" fill="#dedade"/>
<path d="M0.2 0.4 H25.8 V21 H0.2 Z M0.2 5.6 H25.8 M0.2 15.7 H25.8 M5.4 0.4 V21 M19.9 0.4 V21" stroke="#c9c1c9" stroke-width="1" fill="none"/>
<path d="M28.8 5.8 V12.8 L20.8 20 L17.2 16.4 Z" fill="#b3b3b3" stroke="#f3f3f3" stroke-width="0.8"/><path d="M16.4 17.2 L20 20.8 C18.8 25.2 14 27.8 6 27.8 C10.4 25.6 13.2 21.4 16.4 17.2 Z" fill="#b3b3b3" stroke="#f3f3f3" stroke-width="0.8"/><path d="M14 22.8 L15.8 24.2" stroke="#f3f3f3" stroke-width="1.1"/></svg>
<svg style="left:1003.1px;top:128.1px" width="5" height="3" viewBox="0 0 5 3"><path d="M0 0 H5 L2.5 3 Z" fill="#b0b0b0"/></svg>
<svg style="left:1032px;top:72px" width="28" height="28" viewBox="0 0 28 28"><rect x="0.5" y="0.5" width="7" height="5" fill="#f8f4f8" stroke="#c6bec6"/><rect x="7.5" y="0.5" width="7" height="5" fill="#f8f4f8" stroke="#c6bec6"/>
<rect x="11.7" y="8.3" width="7" height="5.2" fill="#dedade" stroke="#c6bec6"/><rect x="18.7" y="8.3" width="7" height="5.2" fill="#dedade" stroke="#c6bec6"/>
<path d="M8.2 10.9 H1.6 M4.4 8 L1.4 10.9 L4.4 13.8" fill="none" stroke="#a9a9a9" stroke-width="1.6"/>
<rect x="0.5" y="16.5" width="7" height="5" fill="#f8f4f8" stroke="#c6bec6"/><rect x="7.5" y="16.5" width="7" height="5" fill="#f8f4f8" stroke="#c6bec6"/><rect x="0.5" y="21.5" width="7" height="5" fill="#f8f4f8" stroke="#c6bec6"/><rect x="7.5" y="21.5" width="7" height="5" fill="#f8f4f8" stroke="#c6bec6"/></svg>
<svg style="left:1042.1px;top:127.1px" width="5" height="3" viewBox="0 0 5 3"><path d="M0 0 H5 L2.5 3 Z" fill="#555"/></svg>
<svg style="left:1073px;top:72px" width="31" height="28" viewBox="0 0 31 28"><rect x="0.5" y="0.5" width="7" height="5" fill="#f8f4f8" stroke="#c6bec6"/><rect x="7.5" y="0.5" width="7" height="5" fill="#f8f4f8" stroke="#c6bec6"/>
<rect x="6.5" y="8.3" width="7" height="5.2" fill="#dedade" stroke="#c6bec6"/><rect x="13.5" y="8.3" width="4" height="5.2" fill="#dedade" stroke="#c6bec6"/>
<path d="M15.4 5.8 L28.6 18.4 M28.6 5.8 L15.4 18.4" stroke="#b5b5b5" stroke-width="2" fill="none"/>
<rect x="0.5" y="17.5" width="7" height="4.6" fill="#f8f4f8" stroke="#c6bec6"/><rect x="7.5" y="17.5" width="7" height="4.6" fill="#f8f4f8" stroke="#c6bec6"/><rect x="0.5" y="22.1" width="7" height="4.6" fill="#f8f4f8" stroke="#c6bec6"/><rect x="7.5" y="22.1" width="7" height="4.6" fill="#f8f4f8" stroke="#c6bec6"/></svg>
<svg style="left:1083.9px;top:127.1px" width="5" height="3" viewBox="0 0 5 3"><path d="M0 0 H5 L2.5 3 Z" fill="#555"/></svg>
<svg style="left:1119px;top:70px" width="30" height="32" viewBox="0 0 30 32"><path d="M1.6 1 V6 M24 1 V6 M2.4 3.5 H23.2 M5.4 1.2 L2.6 3.5 L5.4 5.8 M20.2 1.2 L23 3.5 L20.2 5.8" fill="none" stroke="#2e75b6" stroke-width="1.1"/>
<path d="M1.6 7.6 H28.4 V27.6 H26.4 L24.6 30.8 H19 L16.4 27.8 L13.6 30.8 H3.6 L1.6 27.6 Z" fill="#fff" stroke="#8e8e8e" stroke-width="1"/>
<path d="M1.6 12.1 H28.4 M1.6 22.4 H28.4 M1.6 27.6 H28.4 M8.6 7.6 V27.6 M16.6 7.6 V27.6 M23.6 7.6 V27.6" stroke="#b0b0b0" stroke-width="1" fill="none"/>
<rect x="9.1" y="12.9" width="7" height="8.9" fill="#3b78bf"/></svg>
<svg style="left:1132.1px;top:127.1px" width="5" height="3" viewBox="0 0 5 3"><path d="M0 0 H5 L2.5 3 Z" fill="#555"/></svg>
<svg style="left:1173px;top:70px" width="16" height="16" viewBox="0 0 16 16"><path d="M14 3.6 V1.2 H2 L8.4 8 L2 14.8 H14 V12.4" fill="none" stroke="#a3a3a3" stroke-width="2.1" stroke-linejoin="miter"/></svg>
<svg style="left:1195.1px;top:76.9px" width="5" height="3" viewBox="0 0 5 3"><path d="M0 0 H5 L2.5 3 Z" fill="#555"/></svg>
<svg style="left:1173px;top:92px" width="16" height="17" viewBox="0 0 16 17"><rect x="1.2" y="1.2" width="13.4" height="14.8" fill="#fff" stroke="#8e8e8e" stroke-width="1"/><rect x="0.7" y="0.8" width="14.4" height="3" fill="#727272"/><path d="M7.9 6 V13.4 M4.5 10 L7.9 13.4 L11.3 10" fill="none" stroke="#2e75b6" stroke-width="1.9"/></svg>
<svg style="left:1193.1px;top:99.9px" width="5" height="3" viewBox="0 0 5 3"><path d="M0 0 H5 L2.5 3 Z" fill="#555"/></svg>
<svg style="left:1173px;top:117px" width="15" height="13" viewBox="0 0 15 13"><path d="M9 0.4 L13.8 4 L7 12.4 L1.2 8.4 Z" fill="#e88a9a"/><path d="M1.2 8.4 L7 12.4 L5.6 13 L0.4 9.6Z" fill="#f4c3cb"/></svg>
<svg style="left:1193.1px;top:122.9px" width="5" height="3" viewBox="0 0 5 3"><path d="M0 0 H5 L2.5 3 Z" fill="#555"/></svg>
<svg style="left:1218px;top:72px" width="32" height="28" viewBox="0 0 32 28"><text x="1.2" y="12.7" font-size="15.4" fill="#3277bd" stroke="#3277bd" stroke-width="0.45" textLength="10.6" lengthAdjust="spacingAndGlyphs">A</text><text x="1.8" y="26.6" font-size="15.4" fill="#a04fba" stroke="#a04fba" stroke-width="0.45" textLength="9.6" lengthAdjust="spacingAndGlyphs">Z</text><path d="M13.2 7.9 H30 V9.6 L23 17.4 V22.9 H19.7 V17.4 L13.2 9.6 Z" fill="#7d7d7d"/><rect x="20.7" y="16.6" width="1.3" height="5.3" fill="#f3f3f3"/></svg>
<svg style="left:1251.7px;top:128.1px" width="5" height="3" viewBox="0 0 5 3"><path d="M0 0 H5 L2.5 3 Z" fill="#555"/></svg>
<svg style="left:1281px;top:71px" width="29" height="29" viewBox="0 0 29 29"><path d="M10.2 18.4 L3.2 26" stroke="#3b78bf" stroke-width="3.6" stroke-linecap="round"/><circle cx="18" cy="10.8" r="8.5" fill="#fff" stroke="#3b78bf" stroke-width="2.2"/></svg>
<svg style="left:1322.1px;top:128.1px" width="5" height="3" viewBox="0 0 5 3"><path d="M0 0 H5 L2.5 3 Z" fill="#555"/></svg>
<svg style="left:93px;top:177.5px" width="7" height="4" viewBox="0 0 7 4"><path d="M0 0 H7 L3.5 4 Z" fill="#777"/></svg>
<svg style="left:151px;top:175px" width="11" height="11" viewBox="0 0 11 11"><path d="M1 1 L10 10 M10 1 L1 10" stroke="#b0b0b0" stroke-width="1.7"/></svg>
<svg style="left:186px;top:174px" width="14" height="12" viewBox="0 0 14 12"><path d="M1 6.8 L4.8 10.4 L12.6 1.4" fill="none" stroke="#c6c6c6" stroke-width="2.3"/></svg>
<svg style="left:1348px;top:175.5px" width="10" height="8" viewBox="0 0 10 8"><path d="M1 1.4 L5 5.6 L9 1.4" fill="none" stroke="#555" stroke-width="2.2"/></svg>
<svg style="left:1351.5px;top:210px" width="8" height="5" viewBox="0 0 8 5"><path d="M0 5 L4 0 L8 5Z" fill="#777"/></svg>
<svg style="left:1351.5px;top:707px" width="8" height="5" viewBox="0 0 8 5"><path d="M0 0 L4 5 L8 0Z" fill="#777"/></svg>
<svg style="left:26px;top:726px" width="6" height="9" viewBox="0 0 6 9"><path d="M5.6 0 V9 L0.4 4.5Z" fill="#217346"/></svg>
<svg style="left:55px;top:726px" width="6" height="9" viewBox="0 0 6 9"><path d="M0.4 0 V9 L5.6 4.5Z" fill="#217346"/></svg>
<svg style="left:1090px;top:722px" width="18" height="18" viewBox="0 0 18 18"><circle cx="9" cy="8.8" r="7.6" fill="none" stroke="#777" stroke-width="1.1"/><path d="M9 4.8 V12.8 M5 8.8 H13" stroke="#666" stroke-width="1.6"/></svg>
<svg style="left:1149px;top:727px" width="5" height="8" viewBox="0 0 5 8"><path d="M5 0 V8 L0 4Z" fill="#666"/></svg>
<svg style="left:1334px;top:727px" width="5" height="8" viewBox="0 0 5 8"><path d="M0 0 V8 L5 4Z" fill="#666"/></svg>
<svg style="left:62px;top:749px" width="14" height="13" viewBox="0 0 14 13"><rect x="1.7" y="1.9" width="11" height="10.4" fill="#fff" stroke="#666" stroke-width="1.1"/><path d="M3.6 6 H11 M3.6 8.1 H11 M3.6 10.2 H11" stroke="#666" stroke-width="1" stroke-dasharray="1.6 0.9"/><circle cx="3.3" cy="3.3" r="3" fill="#666"/></svg>
<svg style="left:1098px;top:749px" width="14" height="14" viewBox="0 0 14 14"><path d="M0.5 0.5 H12.5 V12.5 H0.5 Z M4.5 0.5 V12.5 M8.5 0.5 V12.5 M0.5 4.5 H12.5 M0.5 8.5 H12.5" fill="none" stroke="#666" stroke-width="1"/></svg>
<svg style="left:1136px;top:749px" width="15" height="14" viewBox="0 0 15 14"><rect x="0.5" y="0.5" width="13" height="12" fill="none" stroke="#666" stroke-width="1"/><rect x="3.5" y="3.5" width="7" height="7" fill="none" stroke="#666" stroke-width="1"/><path d="M5 6 H9 M5 8 H9" stroke="#666" stroke-width="1"/></svg>
<svg style="left:1174px;top:749px" width="15" height="14" viewBox="0 0 15 14"><path d="M0.5 0.5 H13 V12.5 H0.5 Z M3.6 0.5 V6.5 H7.6 V0.5" fill="none" stroke="#666" stroke-width="1"/></svg>
<span style="left:41.49px;top:202.50px;font-size:12px;color:#262626;">B</span>
<span style="left:61.16px;top:202.50px;font-size:12px;color:#262626;">C</span>
<span style="left:186.66px;top:202.50px;font-size:12px;color:#262626;">D</span>
<span style="left:309.99px;top:202.50px;font-size:12px;color:#262626;">E</span>
<span style="left:334.83px;top:202.50px;font-size:12px;color:#262626;">F</span>
<span style="left:465.33px;top:202.50px;font-size:12px;color:#262626;">G</span>
<span style="left:642.66px;top:202.50px;font-size:12px;color:#262626;">H</span>
<span style="left:814.33px;top:202.50px;font-size:12px;color:#262626;">I</span>
<span style="left:1113.00px;top:202.50px;font-size:12px;color:#262626;">J</span>
<span style="left:28.99px;top:202.50px;font-size:12px;color:#217346;">A</span>
<span style="left:1341.40px;top:202.50px;font-size:12px;color:#262626;clip-path:inset(0 5px 0 0);">K</span>
<span style="left:9.16px;top:249.70px;font-size:12px;color:#217346;">1</span>
<span style="left:9.16px;top:285.70px;font-size:12px;color:#262626;">2</span>
<span style="left:9.16px;top:303.70px;font-size:12px;color:#262626;">3</span>
<span style="left:9.16px;top:340.20px;font-size:12px;color:#262626;">4</span>
<span style="left:9.16px;top:376.20px;font-size:12px;color:#262626;">5</span>
<span style="left:9.16px;top:389.10px;font-size:12px;color:#262626;clip-path:inset(6.4px 0 0 0);">6</span>
<span style="left:9.16px;top:424.90px;font-size:12px;color:#262626;">7</span>
<span style="left:9.16px;top:461.00px;font-size:12px;color:#262626;">8</span>
<span style="left:9.16px;top:469.20px;font-size:12px;color:#262626;clip-path:inset(11px 0 0 0);">9</span>
<span style="left:5.82px;top:499.90px;font-size:12px;color:#262626;">12</span>
<span style="left:5.82px;top:536.00px;font-size:12px;color:#262626;">13</span>
<span style="left:5.82px;top:572.00px;font-size:12px;color:#262626;">14</span>
<span style="left:5.82px;top:608.00px;font-size:12px;color:#262626;">15</span>
<span style="left:5.82px;top:643.90px;font-size:12px;color:#262626;">16</span>
<span style="left:5.82px;top:679.90px;font-size:12px;color:#262626;">17</span>
<span style="left:5.82px;top:699.20px;font-size:12px;color:#262626;">18</span>
<span style="left:181.00px;top:236.00px;font-size:11.5px;color:#ffffff;font-weight:bold;transform:scaleX(0.9176);">CADASTRO</span>
<span style="left:275.00px;top:236.00px;font-size:11.5px;color:#ffffff;font-weight:bold;transform:scaleX(0.9604);">CRONÔMETRO</span>
<span style="left:381.40px;top:228.00px;font-size:11.5px;color:#ffffff;font-weight:bold;transform:scaleX(0.9223);">CONTROLE DE</span>
<span style="left:394.40px;top:244.00px;font-size:11.5px;color:#ffffff;font-weight:bold;transform:scaleX(0.9210);">ESTUDOS</span>
<span style="left:490.00px;top:236.00px;font-size:11.5px;color:#ffffff;font-weight:bold;transform:scaleX(0.9243);">RELATÓRIOS</span>
<span style="left:593.70px;top:236.00px;font-size:11.5px;color:#ffffff;font-weight:bold;transform:scaleX(0.9405);">DASHBOARD</span>
<span style="left:699.50px;top:236.00px;font-size:11.5px;color:#ffffff;font-weight:bold;transform:scaleX(0.9217);">INSTRUÇÕES</span>
<span style="left:153.70px;top:281.00px;font-size:11.5px;color:#404040;font-weight:bold;transform:scaleX(0.9405);">DASHBOARD</span>
<span style="left:95.30px;top:330.50px;font-size:14.5px;color:#0d0d0d;font-weight:bold;transform:scaleX(1.0093);">Selecione o mês</span>
<span style="left:94.00px;top:367.00px;font-size:11.5px;color:#1a1a1a;transform:scaleX(1.0499);">Janeiro</span>
<span style="left:95.30px;top:415.70px;font-size:14.5px;color:#0d0d0d;font-weight:bold;transform:scaleX(0.9955);">Horas de Estudo</span>
<span style="left:94.00px;top:452.30px;font-size:11.5px;color:#1a1a1a;transform:scaleX(0.9312);">20:45</span>
<span style="left:94.70px;top:493.50px;font-size:14.5px;color:#0d0d0d;font-weight:bold;transform:scaleX(0.9942);">Top 5 - Disciplinas</span>
<span style="left:94.40px;top:527.20px;font-size:11.5px;color:#1a1a1a;transform:scaleX(1.0942);">Disciplina 3</span>
<span style="left:94.40px;top:563.20px;font-size:11.5px;color:#1a1a1a;transform:scaleX(1.0942);">Disciplina 5</span>
<span style="left:94.40px;top:599.20px;font-size:11.5px;color:#1a1a1a;transform:scaleX(1.0942);">Disciplina 8</span>
<span style="left:94.40px;top:635.20px;font-size:11.5px;color:#1a1a1a;transform:scaleX(1.0942);">Disciplina 6</span>
<span style="left:94.40px;top:671.20px;font-size:11.5px;color:#1a1a1a;transform:scaleX(1.0942);">Disciplina 4</span>
<span style="left:341.60px;top:493.50px;font-size:14.5px;color:#0d0d0d;font-weight:bold;transform:scaleX(1.0292);">Divisão percentual do tempo em tarefas</span>
<span style="left:720.20px;top:493.50px;font-size:14.5px;color:#0d0d0d;font-weight:bold;transform:scaleX(1.0051);">Top 5 - Períodos de Estudo</span>
<span style="left:952.30px;top:493.50px;font-size:14.5px;color:#0d0d0d;font-weight:bold;transform:scaleX(1.0323);">Divisão percentual do tempo em projetos</span>
<span style="left:719.30px;top:527.20px;font-size:11.5px;color:#1a1a1a;letter-spacing:0.35px;">Noite</span>
<span style="left:719.30px;top:563.20px;font-size:11.5px;color:#1a1a1a;letter-spacing:0.35px;">Tarde</span>
<span style="left:719.30px;top:599.20px;font-size:11.5px;color:#1a1a1a;letter-spacing:0.35px;">Madrugada</span>
<span style="left:719.30px;top:635.20px;font-size:11.5px;color:#1a1a1a;letter-spacing:0.35px;">Manhã</span>
<span style="left:331.68px;top:376.70px;font-size:9.9px;color:#404040;">0:30</span>
<span style="left:338.24px;top:454.30px;font-size:11px;color:#404040;">1</span>
<span style="left:362.94px;top:376.70px;font-size:9.9px;color:#404040;">0:30</span>
<span style="left:369.49px;top:454.30px;font-size:11px;color:#404040;">2</span>
<span style="left:394.19px;top:330.60px;font-size:9.9px;color:#404040;">1:00</span>
<span style="left:400.75px;top:454.30px;font-size:11px;color:#404040;">3</span>
<span style="left:425.45px;top:353.50px;font-size:9.9px;color:#404040;">0:45</span>
<span style="left:432.00px;top:454.30px;font-size:11px;color:#404040;">4</span>
<span style="left:456.70px;top:392.60px;font-size:9.9px;color:#404040;">0:20</span>
<span style="left:463.26px;top:454.30px;font-size:11px;color:#404040;">5</span>
<span style="left:487.96px;top:353.50px;font-size:9.9px;color:#404040;">0:45</span>
<span style="left:494.51px;top:454.30px;font-size:11px;color:#404040;">6</span>
<span style="left:519.21px;top:330.60px;font-size:9.9px;color:#404040;">1:00</span>
<span style="left:525.77px;top:454.30px;font-size:11px;color:#404040;">7</span>
<span style="left:550.47px;top:376.70px;font-size:9.9px;color:#404040;">0:30</span>
<span style="left:557.02px;top:454.30px;font-size:11px;color:#404040;">8</span>
<span style="left:581.72px;top:353.50px;font-size:9.9px;color:#404040;">0:45</span>
<span style="left:588.28px;top:454.30px;font-size:11px;color:#404040;">9</span>
<span style="left:612.98px;top:376.70px;font-size:9.9px;color:#404040;">0:30</span>
<span style="left:616.47px;top:454.30px;font-size:11px;color:#404040;">10</span>
<span style="left:644.23px;top:376.70px;font-size:9.9px;color:#404040;">0:30</span>
<span style="left:648.14px;top:454.30px;font-size:11px;color:#404040;">11</span>
<span style="left:675.49px;top:330.60px;font-size:9.9px;color:#404040;">1:00</span>
<span style="left:678.98px;top:454.30px;font-size:11px;color:#404040;">12</span>
<span style="left:706.74px;top:353.50px;font-size:9.9px;color:#404040;">0:45</span>
<span style="left:710.24px;top:454.30px;font-size:11px;color:#404040;">13</span>
<span style="left:738.00px;top:392.60px;font-size:9.9px;color:#404040;">0:20</span>
<span style="left:741.49px;top:454.30px;font-size:11px;color:#404040;">14</span>
<span style="left:769.25px;top:353.50px;font-size:9.9px;color:#404040;">0:45</span>
<span style="left:772.75px;top:454.30px;font-size:11px;color:#404040;">15</span>
<span style="left:800.51px;top:330.60px;font-size:9.9px;color:#404040;">1:00</span>
<span style="left:804.00px;top:454.30px;font-size:11px;color:#404040;">16</span>
<span style="left:831.76px;top:376.70px;font-size:9.9px;color:#404040;">0:30</span>
<span style="left:835.25px;top:454.30px;font-size:11px;color:#404040;">17</span>
<span style="left:863.02px;top:353.50px;font-size:9.9px;color:#404040;">0:45</span>
<span style="left:866.51px;top:454.30px;font-size:11px;color:#404040;">18</span>
<span style="left:894.27px;top:376.70px;font-size:9.9px;color:#404040;">0:30</span>
<span style="left:897.77px;top:454.30px;font-size:11px;color:#404040;">19</span>
<span style="left:925.53px;top:376.70px;font-size:9.9px;color:#404040;">0:30</span>
<span style="left:929.02px;top:454.30px;font-size:11px;color:#404040;">20</span>
<span style="left:956.78px;top:330.60px;font-size:9.9px;color:#404040;">1:00</span>
<span style="left:960.28px;top:454.30px;font-size:11px;color:#404040;">21</span>
<span style="left:988.04px;top:376.70px;font-size:9.9px;color:#404040;">0:30</span>
<span style="left:991.53px;top:454.30px;font-size:11px;color:#404040;">22</span>
<span style="left:1019.29px;top:376.70px;font-size:9.9px;color:#404040;">0:30</span>
<span style="left:1022.79px;top:454.30px;font-size:11px;color:#404040;">23</span>
<span style="left:1050.55px;top:376.70px;font-size:9.9px;color:#404040;">0:30</span>
<span style="left:1054.04px;top:454.30px;font-size:11px;color:#404040;">24</span>
<span style="left:1081.80px;top:330.60px;font-size:9.9px;color:#404040;">1:00</span>
<span style="left:1085.30px;top:454.30px;font-size:11px;color:#404040;">25</span>
<span style="left:1113.06px;top:353.50px;font-size:9.9px;color:#404040;">0:45</span>
<span style="left:1116.55px;top:454.30px;font-size:11px;color:#404040;">26</span>
<span style="left:1144.31px;top:392.60px;font-size:9.9px;color:#404040;">0:20</span>
<span style="left:1147.81px;top:454.30px;font-size:11px;color:#404040;">27</span>
<span style="left:1175.57px;top:353.50px;font-size:9.9px;color:#404040;">0:45</span>
<span style="left:1179.06px;top:454.30px;font-size:11px;color:#404040;">28</span>
<span style="left:1206.82px;top:330.60px;font-size:9.9px;color:#404040;">1:00</span>
<span style="left:1210.32px;top:454.30px;font-size:11px;color:#404040;">29</span>
<span style="left:1238.08px;top:376.70px;font-size:9.9px;color:#404040;">0:30</span>
<span style="left:1241.57px;top:454.30px;font-size:11px;color:#404040;">30</span>
<span style="left:1269.33px;top:353.50px;font-size:9.9px;color:#404040;">0:45</span>
<span style="left:1272.83px;top:454.30px;font-size:11px;color:#404040;">31</span>
<span style="left:463.70px;top:588.40px;font-size:9.8px;color:#fff;">44%</span>
<span style="left:388.10px;top:658.70px;font-size:9.8px;color:#fff;">21%</span>
<span style="left:344.40px;top:614.20px;font-size:9.8px;color:#fff;">13%</span>
<span style="left:351.25px;top:570.20px;font-size:9.8px;color:#fff;">11%</span>
<span style="left:382.85px;top:542.40px;font-size:9.8px;color:#fff;">11%</span>
<span style="left:556.80px;top:550.30px;font-size:9.8px;color:#595959;transform:scaleX(0.9819);">Disciplina 3</span>
<span style="left:629.90px;top:550.30px;font-size:9.8px;color:#595959;transform:scaleX(0.9779);">Disciplina 5</span>
<span style="left:556.80px;top:597.90px;font-size:9.8px;color:#595959;transform:scaleX(0.9819);">Disciplina 8</span>
<span style="left:629.90px;top:597.90px;font-size:9.8px;color:#595959;transform:scaleX(0.9779);">Disciplina 6</span>
<span style="left:556.80px;top:645.50px;font-size:9.8px;color:#595959;transform:scaleX(0.9819);">Disciplina 4</span>
<span style="left:1080.80px;top:576.70px;font-size:9.8px;color:#fff;">37%</span>
<span style="left:1019.20px;top:658.70px;font-size:9.8px;color:#fff;">29%</span>
<span style="left:968.00px;top:592.80px;font-size:9.8px;color:#fff;">21%</span>
<span style="left:1003.10px;top:545.30px;font-size:9.8px;color:#fff;">13%</span>
<span style="left:1029.31px;top:540.40px;font-size:9.8px;color:#fff;">0%</span>
<span style="left:1171.60px;top:551.20px;font-size:9.8px;color:#595959;transform:scaleX(1.0317);">Noite</span>
<span style="left:1244.10px;top:551.20px;font-size:9.8px;color:#595959;transform:scaleX(1.0198);">Tarde</span>
<span style="left:1171.60px;top:598.70px;font-size:9.8px;color:#595959;">Madrugada</span>
<span style="left:1244.10px;top:598.70px;font-size:9.8px;color:#595959;transform:scaleX(1.0311);">Manhã</span>
<span style="left:23.00px;top:7.00px;font-size:11.5px;color:#5a9977;transform:scaleX(1.0594);">Salvamento Automático</span>
<span style="left:503.40px;top:6.00px;font-size:11.5px;color:#fff;transform:scaleX(1.0057);">Planilha de Controle de Estudo para Concurso 4.0 - Exemplo&nbsp; -&nbsp; Excel</span>
<span style="left:1130.40px;top:5.80px;font-size:11.5px;color:#217346;transform:scaleX(0.9736);">Entrar</span>
<span style="left:8.00px;top:38.60px;font-size:11.8px;color:#fff;transform:scaleX(1.0500);">Arquivo</span>
<span style="left:170.00px;top:38.60px;font-size:11.8px;color:#fff;transform:scaleX(0.9762);">Inserir</span>
<span style="left:229.00px;top:38.60px;font-size:11.8px;color:#fff;transform:scaleX(0.9908);">Layout da Página</span>
<span style="left:347.00px;top:38.60px;font-size:11.8px;color:#fff;">Fórmulas</span>
<span style="left:423.00px;top:38.60px;font-size:11.8px;color:#fff;transform:scaleX(0.9675);">Dados</span>
<span style="left:483.50px;top:38.60px;font-size:11.8px;color:#fff;transform:scaleX(0.9267);">Revisão</span>
<span style="left:550.30px;top:38.60px;font-size:11.8px;color:#fff;transform:scaleX(0.9458);">Exibir</span>
<span style="left:605.30px;top:38.60px;font-size:11.8px;color:#fff;transform:scaleX(0.9873);">Desenvolvedor</span>
<span style="left:709.70px;top:38.60px;font-size:11.8px;color:#fff;transform:scaleX(1.0236);">Ajuda</span>
<span style="left:790.20px;top:38.60px;font-size:11.8px;color:#fff;transform:scaleX(0.9895);">Diga-me o que você deseja fazer</span>
<span style="left:1289.40px;top:38.60px;font-size:11.8px;color:#fff;transform:scaleX(1.0336);">Compartilhar</span>
<span style="left:73.00px;top:38.60px;font-size:11.8px;color:#217346;">Página Inicial</span>
<span style="left:4.00px;top:137.60px;font-size:11.5px;color:#444;transform:scaleX(0.9410);">Área de Transf...</span>
<span style="left:188.00px;top:137.60px;font-size:11.5px;color:#444;transform:scaleX(0.9857);">Fonte</span>
<span style="left:442.00px;top:137.60px;font-size:11.5px;color:#444;transform:scaleX(1.0166);">Alinhamento</span>
<span style="left:694.00px;top:137.60px;font-size:11.5px;color:#444;transform:scaleX(0.9778);">Número</span>
<span style="left:889.00px;top:137.60px;font-size:11.5px;color:#444;transform:scaleX(0.9742);">Estilos</span>
<span style="left:1074.60px;top:137.60px;font-size:11.5px;color:#444;transform:scaleX(0.9229);">Células</span>
<span style="left:1233.60px;top:137.60px;font-size:11.5px;color:#444;transform:scaleX(0.9411);">Edição</span>
<span style="left:21.00px;top:103.00px;font-size:11.8px;color:#a6a6a6;transform:scaleX(0.9928);">Colar</span>
<span style="left:115.00px;top:76.80px;font-size:11.8px;color:#262626;transform:scaleX(0.9869);">Calibri</span>
<span style="left:225.20px;top:76.80px;font-size:11.8px;color:#262626;transform:scaleX(0.8990);">12</span>
<span style="left:271.00px;top:78.00px;font-size:14px;color:#a6a6a6;transform:scaleX(1.0702);">A</span>
<span style="left:294.00px;top:78.80px;font-size:11.5px;color:#a6a6a6;transform:scaleX(1.0428);">A</span>
<span style="left:118.00px;top:107.40px;font-size:12.6px;color:#9c9c9c;font-weight:bold;transform:scaleX(0.9221);">N</span>
<span style="left:141.00px;top:107.40px;font-size:12.4px;color:#a6a6a6;transform:scaleX(1.1184);font-style:italic;font-family:'Liberation Serif',serif;font-weight:bold;">I</span>
<span style="left:161.60px;top:107.20px;font-size:12.4px;color:#a6a6a6;transform:scaleX(1.0163);text-decoration:underline;">S</span>
<span style="left:281.00px;top:106.80px;font-size:14.5px;color:#a6a6a6;transform:scaleX(1.0753);">A</span>
<span style="left:468.30px;top:77.00px;font-size:11.8px;color:#a6a6a6;transform:scaleX(1.0221);">Quebrar Texto Automaticamente</span>
<span style="left:468.30px;top:107.60px;font-size:11.8px;color:#a6a6a6;transform:scaleX(0.9771);">Mesclar e Centralizar</span>
<span style="left:696.00px;top:107.40px;font-size:13.5px;color:#a6a6a6;transform:scaleX(1.1319);">%</span>
<span style="left:716.80px;top:106.60px;font-size:10.2px;color:#a6a6a6;transform:scaleX(0.8588);">000</span>
<span style="left:804.20px;top:103.40px;font-size:11.8px;color:#a6a6a6;">Formatação</span>
<span style="left:799.20px;top:119.20px;font-size:11.8px;color:#a6a6a6;transform:scaleX(1.0348);">Condicional</span>
<span style="left:876.40px;top:103.40px;font-size:11.8px;color:#a6a6a6;transform:scaleX(1.0177);">Formatar como</span>
<span style="left:896.40px;top:119.20px;font-size:11.8px;color:#a6a6a6;transform:scaleX(0.9665);">Tabela</span>
<span style="left:963.50px;top:103.40px;font-size:11.8px;color:#a6a6a6;transform:scaleX(0.9481);">Estilos de</span>
<span style="left:967.50px;top:119.20px;font-size:11.8px;color:#a6a6a6;transform:scaleX(0.9715);">Célula</span>
<span style="left:1029.60px;top:102.80px;font-size:11.8px;color:#262626;transform:scaleX(0.9518);">Inserir</span>
<span style="left:1070.60px;top:102.80px;font-size:11.8px;color:#262626;transform:scaleX(0.9377);">Excluir</span>
<span style="left:1110.20px;top:102.80px;font-size:11.8px;color:#262626;">Formatar</span>
<span style="left:1207.20px;top:102.80px;font-size:11.8px;color:#262626;transform:scaleX(0.9705);">Classificar</span>
<span style="left:1210.20px;top:119.20px;font-size:11.8px;color:#262626;transform:scaleX(0.9954);">e Filtrar</span>
<span style="left:1269.20px;top:102.80px;font-size:11.8px;color:#262626;transform:scaleX(0.9604);">Localizar e</span>
<span style="left:1265.40px;top:119.20px;font-size:11.8px;color:#262626;transform:scaleX(0.9686);">Selecionar</span>
<span style="left:12.00px;top:171.00px;font-size:13px;color:#333;transform:scaleX(1.0059);">A1</span>
<span style="left:222.80px;top:169.60px;font-size:14px;color:#555;font-style:italic;font-weight:bold;font-family:'Liberation Serif',serif;">f</span>
<span style="left:227.40px;top:172.00px;font-size:10px;color:#555;font-style:italic;font-weight:bold;font-family:'Liberation Serif',serif;">x</span>
<span style="left:112.81px;top:721.20px;font-size:13px;color:#444;">Cron</span>
<span style="left:165.57px;top:721.20px;font-size:13px;color:#444;">JAN</span>
<span style="left:213.25px;top:721.20px;font-size:13px;color:#444;">FEV</span>
<span style="left:261.55px;top:721.20px;font-size:13px;color:#444;">MAR</span>
<span style="left:313.73px;top:721.20px;font-size:13px;color:#444;">ABR</span>
<span style="left:364.54px;top:721.20px;font-size:13px;color:#444;">MAI</span>
<span style="left:412.31px;top:721.20px;font-size:13px;color:#444;">JUN</span>
<span style="left:460.99px;top:721.20px;font-size:13px;color:#444;">JUL</span>
<span style="left:507.15px;top:721.20px;font-size:13px;color:#444;">AGO</span>
<span style="left:557.85px;top:721.20px;font-size:13px;color:#444;">SET</span>
<span style="left:605.22px;top:721.20px;font-size:13px;color:#444;">OUT</span>
<span style="left:656.96px;top:721.20px;font-size:13px;color:#444;">NOV</span>
<span style="left:709.10px;top:721.20px;font-size:13px;color:#444;">DEZ</span>
<span style="left:759.28px;top:721.20px;font-size:13px;color:#444;">RTim</span>
<span style="left:814.84px;top:721.20px;font-size:13px;color:#444;">RTar</span>
<span style="left:865.85px;top:721.20px;font-size:13px;color:#444;">RPr</span>
<span style="left:911.74px;top:721.20px;font-size:13px;color:#444;">RDet</span>
<span style="left:965.10px;top:721.00px;font-size:13px;color:#217346;font-weight:bold;">Dash</span>
<span style="left:1021.14px;top:721.20px;font-size:13px;color:#444;">INI</span>
<span style="left:79.96px;top:719.40px;font-size:14px;color:#217346;font-weight:bold;">...</span>
<span style="left:1065.66px;top:719.40px;font-size:14px;color:#217346;font-weight:bold;">...</span>
<span style="left:7.30px;top:746.00px;font-size:11.8px;color:#262626;transform:scaleX(0.9693);">Pronto</span>
<span style="left:1337.70px;top:745.20px;font-size:11.8px;color:#262626;transform:scaleX(0.8466);">90%</span>
</div></body></html>
